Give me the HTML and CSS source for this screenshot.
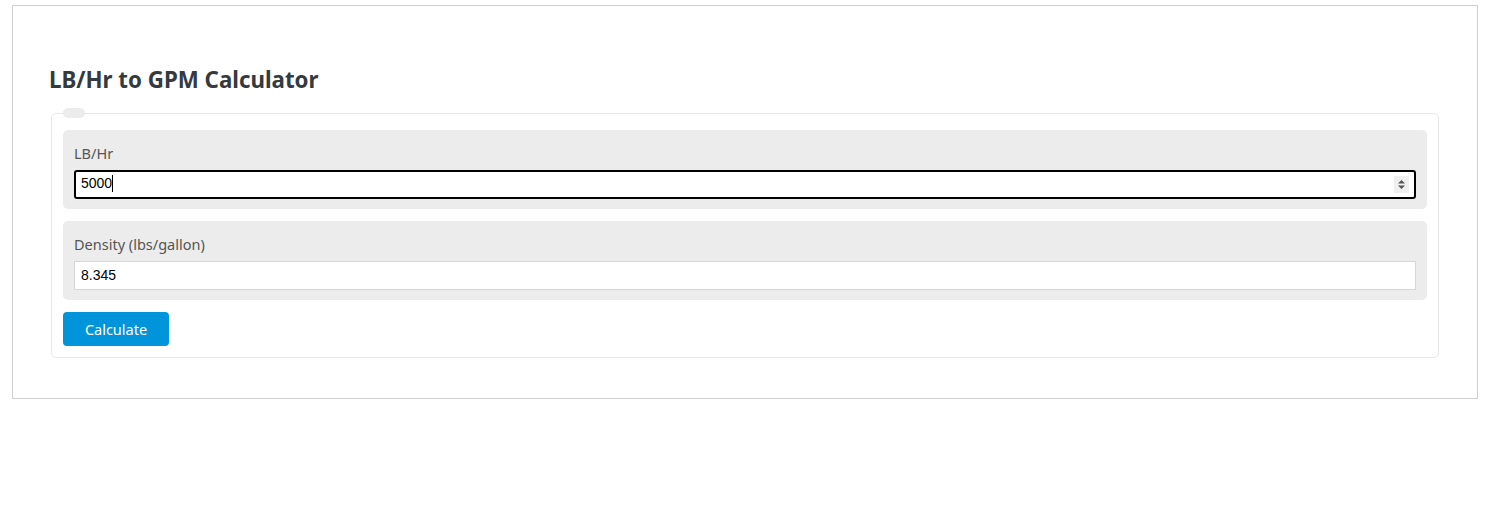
FILE: index.html
```html
<!DOCTYPE html>
<html>
<head>
<meta charset="utf-8">
<link rel="stylesheet" href="styles.css">
</head>
<body>
<div class="card">
  <h1 class="title">LB/Hr to GPM Calculator</h1>
  <fieldset class="calc">
    <legend class="legend"></legend>
    <div class="group">
      <label class="label">LB/Hr</label>
      <div class="input focused">
        <span class="value">5000<span class="caret"></span></span>
        <span class="spin">
          <svg width="15" height="17" viewBox="0 0 15 17"><path d="M7.5 4 L11 7.5 H4 Z M7.5 13 L11 9.5 H4 Z" fill="#555"/></svg>
        </span>
      </div>
    </div>
    <div class="group">
      <label class="label">Density (lbs/gallon)</label>
      <div class="input"><span class="value">8.345</span></div>
    </div>
    <button class="btn">Calculate</button>
  </fieldset>
</div>
</body>
</html>
```
FILE: styles.css
```css
* { box-sizing: border-box; }
body {
  margin: 5px 11px 0 12px;
  font-family: "Noto Sans", "Open Sans", sans-serif;
  background: #fff;
}
.card {
  border: 1px solid #cfcfcf;
  padding: 59px 38px 40px 36px;
  height: 394px;
}
.title {
  margin: 0 0 18px 0;
  font-family: "Noto Sans", sans-serif;
  font-size: 22.3px;
  font-weight: 700;
  color: #333a40;
  line-height: 30px;
}
.calc {
  position: relative;
  margin: 0 0 0 2px;
  border: 1px solid #e8e8e8;
  border-radius: 5px;
  padding: 16px 11px 11px 11px;
  min-width: 0;
}
.legend {
  position: absolute;
  top: -6px;
  left: 11px;
  width: 22px;
  height: 10px;
  padding: 0;
  background: #ebeceb;
  border-radius: 5px;
}
.group {
  background: #ebeceb;
  border-radius: 5px;
  padding: 11px 11px 11px 11px;
  margin-bottom: 12px;
  height: 79px;
}
.label {
  display: block;
  font-family: "Noto Sans", sans-serif;
  font-size: 14.5px;
  color: #555;
  line-height: 20px;
  padding-top: 2px;
  margin-bottom: 7px;
}
.input {
  position: relative;
  height: 29px;
  background: #fff;
  border: 1px solid #d6d6d6;
  display: flex;
  align-items: center;
  padding: 0 6px;
  font-family: "Liberation Sans", Arial, sans-serif;
  font-size: 14px;
  color: #000;
}
.input .value { position: relative; top: -1px; }
.input.focused {
  border: 2px solid #000;
  border-radius: 3px;
  padding: 0 5px;
}
.caret {
  display: inline-block;
  width: 1px;
  height: 17px;
  background: #000;
  vertical-align: -4px;
}
.spin {
  position: absolute;
  right: 5px;
  top: 4px;
  width: 15px;
  height: 17px;
  background: #efefef;
  display: flex;
}
.btn {
  display: block;
  width: 106px;
  height: 34px;
  border: none;
  border-radius: 4px;
  background: #0095db;
  color: #fff;
  font-family: "Noto Sans", sans-serif;
  font-size: 14.5px;
  padding: 0;
}
```
